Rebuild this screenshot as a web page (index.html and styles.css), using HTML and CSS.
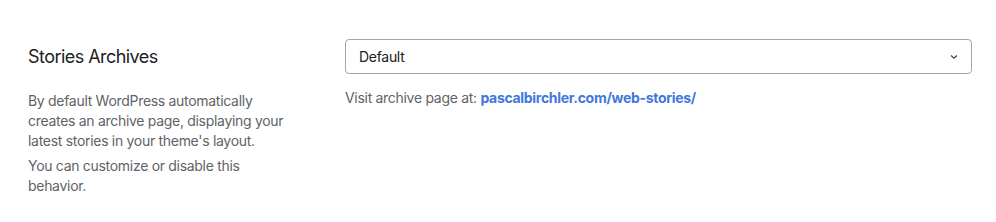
FILE: index.html
```html
<!DOCTYPE html>
<html lang="en">
<head>
    <meta charset="UTF-8">
    <title>Stories Archives</title>
    <link rel="stylesheet" href="styles.css">
</head>
<body>

<div class="settings-row">
    <div class="settings-info">
        <h3>Stories Archives</h3>
        <p>By default WordPress automatically creates an archive page, displaying your latest stories in your theme's layout.</p>
        <p>You can customize or disable this behavior.</p>
    </div>

    <div class="settings-field">
        <div class="select-box">
            <span>Default</span>
            <svg class="chevron" width="10" height="6" viewBox="0 0 10 6">
                <path d="M2 1.5 L5 4.2 L8 1.5" fill="none" stroke="#3c4043" stroke-width="1.1"/>
            </svg>
        </div>
        <p class="archive-link">Visit archive page at: <a href="#">pascalbirchler.com/web-stories/</a></p>
    </div>
</div>

</body>
</html>
```

FILE: styles.css
```css
* {
    box-sizing: border-box;
    margin: 0;
    padding: 0;
}

body {
    font-family: Inter, 'Noto Sans', sans-serif;
    background: #ffffff;
    color: #202124;
    letter-spacing: -0.3px;
}

.settings-row {
    display: grid;
    grid-template-columns: 265px 1fr;
    column-gap: 52px;
    padding: 39px 24px 0 28px;
}

.settings-info h3 {
    font-size: 18px;
    font-weight: 400;
    line-height: 24px;
    letter-spacing: -0.55px;
    color: #202124;
    margin-top: 6px;
    margin-bottom: 22px;
}

.settings-info p {
    font-size: 14px;
    line-height: 20px;
    color: #5f6368;
    margin-bottom: 5px;
}

.select-box {
    height: 35px;
    border: 1px solid #a6a6a6;
    border-radius: 4px;
    display: flex;
    align-items: center;
    justify-content: space-between;
    padding: 0 12px 0 13px;
    font-size: 14px;
    color: #202124;
}

.archive-link {
    margin-top: 14px;
    font-size: 14px;
    line-height: 20px;
    color: #5f6368;
}

.archive-link a {
    color: #4278dc;
    font-weight: 700;
    text-decoration: none;
}
```
